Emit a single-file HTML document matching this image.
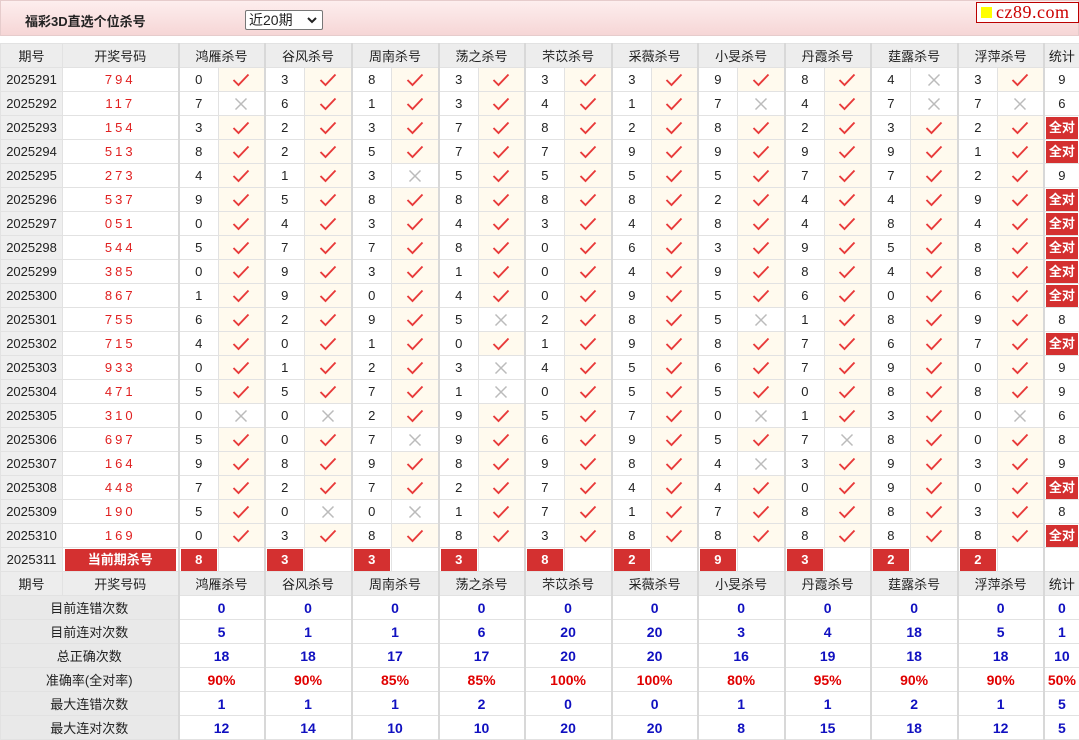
<!DOCTYPE html><html><head><meta charset="utf-8"><style>
body{margin:0;width:1079px;height:738px;overflow:hidden;background:#fff;font-family:"Liberation Sans","Noto Sans CJK SC",sans-serif;font-size:13px;color:#222}
.hd{position:absolute;left:0;top:0;width:1077px;height:34px;border:1px solid #e6cccc;background:linear-gradient(#fdeeee,#f6d6d6)}
.tt{position:absolute;left:24px;top:10px;font-weight:bold;font-size:13px;color:#222}
.sel{position:absolute;left:244px;top:9px;width:73px;height:18px;border:1px solid #777;border-radius:2px;background:#fff;font-size:14px;line-height:18px;padding-left:3px;box-sizing:content-box}
.sel svg{position:absolute;right:5px;top:6px}
.logo{position:absolute;left:975px;top:1px;width:101px;height:19px;border:1px solid #b00;background:#fff}
.logo i{position:absolute;left:4px;top:4px;width:11px;height:11px;background:#ff0}
.logo span{position:absolute;left:19px;top:-1px;font-family:"Liberation Serif",serif;font-size:18px;color:#c00;letter-spacing:.5px}
table{position:absolute;left:0;top:43px;border-collapse:collapse;table-layout:fixed;width:1079px}
td{height:23px;border:1px solid #e2e2e2;text-align:center;padding:0;font-size:13px;white-space:nowrap;overflow:hidden}
tr.h td{background:#ededed}
td.p{background:#efefef}
td.c{color:#e02020;letter-spacing:3px}
td.m{background:#fffaee}
td.g{border-left:2px solid #d8d8d8}
td.s span,td.r span{display:block;margin:0 1px;height:22px;line-height:22px;background:#d43030;color:#fff;font-weight:bold}
td.k span{display:block;height:22px;line-height:22px;background:#d43030;color:#fff;font-weight:bold;margin:0 2px}
td.l{background:#e9e9e9}
td.v{color:#1010c0;font-weight:bold;font-size:14px}
td.q{color:#e00000;font-weight:bold;font-size:14px}
td>svg{display:block;margin:0 auto}
</style></head><body>
<svg width="0" height="0" style="position:absolute"><defs>
<symbol id="y" viewBox="0 0 20 16"><path d="M2.5 8 L7.5 13 L17.5 2.5" fill="none" stroke="#e83a3a" stroke-width="1.9"/></symbol>
<symbol id="x" viewBox="0 0 20 16"><path d="M4.5 2.5 L15.5 13.5 M15.5 2.5 L4.5 13.5" fill="none" stroke="#bbb" stroke-width="1.5"/></symbol>
</defs></svg>
<div class="hd"><div class="tt">福彩3D直选个位杀号</div><div class="sel">近20期<svg width="10" height="7"><path d="M1 1 L5 5 L9 1" fill="none" stroke="#222" stroke-width="2"/></svg></div><div class="logo"><i></i><span>cz89.com</span></div></div>
<table id="t">
<colgroup><col style="width:62px"><col style="width:116px">
<col style="width:40px"><col style="width:46px"><col style="width:40px"><col style="width:47px"><col style="width:40px"><col style="width:47px"><col style="width:40px"><col style="width:46px"><col style="width:40px"><col style="width:47px"><col style="width:40px"><col style="width:46px"><col style="width:40px"><col style="width:47px"><col style="width:40px"><col style="width:46px"><col style="width:40px"><col style="width:47px"><col style="width:40px"><col style="width:46px"><col style="width:36px"></colgroup>
<tr class="h"><td>期号</td><td>开奖号码</td><td colspan="2" class="g">鸿雁杀号</td><td colspan="2" class="g">谷风杀号</td><td colspan="2" class="g">周南杀号</td><td colspan="2" class="g">荡之杀号</td><td colspan="2" class="g">芣苡杀号</td><td colspan="2" class="g">采薇杀号</td><td colspan="2" class="g">小旻杀号</td><td colspan="2" class="g">丹霞杀号</td><td colspan="2" class="g">莛露杀号</td><td colspan="2" class="g">浮萍杀号</td><td class="g">统计</td></tr>
<tr><td class="p">2025291</td><td class="c">794</td><td class="g">0</td><td class="m"><svg width="20" height="16"><use href="#y"/></svg></td><td class="g">3</td><td class="m"><svg width="20" height="16"><use href="#y"/></svg></td><td class="g">8</td><td class="m"><svg width="20" height="16"><use href="#y"/></svg></td><td class="g">3</td><td class="m"><svg width="20" height="16"><use href="#y"/></svg></td><td class="g">3</td><td class="m"><svg width="20" height="16"><use href="#y"/></svg></td><td class="g">3</td><td class="m"><svg width="20" height="16"><use href="#y"/></svg></td><td class="g">9</td><td class="m"><svg width="20" height="16"><use href="#y"/></svg></td><td class="g">8</td><td class="m"><svg width="20" height="16"><use href="#y"/></svg></td><td class="g">4</td><td><svg width="20" height="16"><use href="#x"/></svg></td><td class="g">3</td><td class="m"><svg width="20" height="16"><use href="#y"/></svg></td><td class="g">9</td></tr>
<tr><td class="p">2025292</td><td class="c">117</td><td class="g">7</td><td><svg width="20" height="16"><use href="#x"/></svg></td><td class="g">6</td><td class="m"><svg width="20" height="16"><use href="#y"/></svg></td><td class="g">1</td><td class="m"><svg width="20" height="16"><use href="#y"/></svg></td><td class="g">3</td><td class="m"><svg width="20" height="16"><use href="#y"/></svg></td><td class="g">4</td><td class="m"><svg width="20" height="16"><use href="#y"/></svg></td><td class="g">1</td><td class="m"><svg width="20" height="16"><use href="#y"/></svg></td><td class="g">7</td><td><svg width="20" height="16"><use href="#x"/></svg></td><td class="g">4</td><td class="m"><svg width="20" height="16"><use href="#y"/></svg></td><td class="g">7</td><td><svg width="20" height="16"><use href="#x"/></svg></td><td class="g">7</td><td><svg width="20" height="16"><use href="#x"/></svg></td><td class="g">6</td></tr>
<tr><td class="p">2025293</td><td class="c">154</td><td class="g">3</td><td class="m"><svg width="20" height="16"><use href="#y"/></svg></td><td class="g">2</td><td class="m"><svg width="20" height="16"><use href="#y"/></svg></td><td class="g">3</td><td class="m"><svg width="20" height="16"><use href="#y"/></svg></td><td class="g">7</td><td class="m"><svg width="20" height="16"><use href="#y"/></svg></td><td class="g">8</td><td class="m"><svg width="20" height="16"><use href="#y"/></svg></td><td class="g">2</td><td class="m"><svg width="20" height="16"><use href="#y"/></svg></td><td class="g">8</td><td class="m"><svg width="20" height="16"><use href="#y"/></svg></td><td class="g">2</td><td class="m"><svg width="20" height="16"><use href="#y"/></svg></td><td class="g">3</td><td class="m"><svg width="20" height="16"><use href="#y"/></svg></td><td class="g">2</td><td class="m"><svg width="20" height="16"><use href="#y"/></svg></td><td class="g s"><span>全对</span></td></tr>
<tr><td class="p">2025294</td><td class="c">513</td><td class="g">8</td><td class="m"><svg width="20" height="16"><use href="#y"/></svg></td><td class="g">2</td><td class="m"><svg width="20" height="16"><use href="#y"/></svg></td><td class="g">5</td><td class="m"><svg width="20" height="16"><use href="#y"/></svg></td><td class="g">7</td><td class="m"><svg width="20" height="16"><use href="#y"/></svg></td><td class="g">7</td><td class="m"><svg width="20" height="16"><use href="#y"/></svg></td><td class="g">9</td><td class="m"><svg width="20" height="16"><use href="#y"/></svg></td><td class="g">9</td><td class="m"><svg width="20" height="16"><use href="#y"/></svg></td><td class="g">9</td><td class="m"><svg width="20" height="16"><use href="#y"/></svg></td><td class="g">9</td><td class="m"><svg width="20" height="16"><use href="#y"/></svg></td><td class="g">1</td><td class="m"><svg width="20" height="16"><use href="#y"/></svg></td><td class="g s"><span>全对</span></td></tr>
<tr><td class="p">2025295</td><td class="c">273</td><td class="g">4</td><td class="m"><svg width="20" height="16"><use href="#y"/></svg></td><td class="g">1</td><td class="m"><svg width="20" height="16"><use href="#y"/></svg></td><td class="g">3</td><td><svg width="20" height="16"><use href="#x"/></svg></td><td class="g">5</td><td class="m"><svg width="20" height="16"><use href="#y"/></svg></td><td class="g">5</td><td class="m"><svg width="20" height="16"><use href="#y"/></svg></td><td class="g">5</td><td class="m"><svg width="20" height="16"><use href="#y"/></svg></td><td class="g">5</td><td class="m"><svg width="20" height="16"><use href="#y"/></svg></td><td class="g">7</td><td class="m"><svg width="20" height="16"><use href="#y"/></svg></td><td class="g">7</td><td class="m"><svg width="20" height="16"><use href="#y"/></svg></td><td class="g">2</td><td class="m"><svg width="20" height="16"><use href="#y"/></svg></td><td class="g">9</td></tr>
<tr><td class="p">2025296</td><td class="c">537</td><td class="g">9</td><td class="m"><svg width="20" height="16"><use href="#y"/></svg></td><td class="g">5</td><td class="m"><svg width="20" height="16"><use href="#y"/></svg></td><td class="g">8</td><td class="m"><svg width="20" height="16"><use href="#y"/></svg></td><td class="g">8</td><td class="m"><svg width="20" height="16"><use href="#y"/></svg></td><td class="g">8</td><td class="m"><svg width="20" height="16"><use href="#y"/></svg></td><td class="g">8</td><td class="m"><svg width="20" height="16"><use href="#y"/></svg></td><td class="g">2</td><td class="m"><svg width="20" height="16"><use href="#y"/></svg></td><td class="g">4</td><td class="m"><svg width="20" height="16"><use href="#y"/></svg></td><td class="g">4</td><td class="m"><svg width="20" height="16"><use href="#y"/></svg></td><td class="g">9</td><td class="m"><svg width="20" height="16"><use href="#y"/></svg></td><td class="g s"><span>全对</span></td></tr>
<tr><td class="p">2025297</td><td class="c">051</td><td class="g">0</td><td class="m"><svg width="20" height="16"><use href="#y"/></svg></td><td class="g">4</td><td class="m"><svg width="20" height="16"><use href="#y"/></svg></td><td class="g">3</td><td class="m"><svg width="20" height="16"><use href="#y"/></svg></td><td class="g">4</td><td class="m"><svg width="20" height="16"><use href="#y"/></svg></td><td class="g">3</td><td class="m"><svg width="20" height="16"><use href="#y"/></svg></td><td class="g">4</td><td class="m"><svg width="20" height="16"><use href="#y"/></svg></td><td class="g">8</td><td class="m"><svg width="20" height="16"><use href="#y"/></svg></td><td class="g">4</td><td class="m"><svg width="20" height="16"><use href="#y"/></svg></td><td class="g">8</td><td class="m"><svg width="20" height="16"><use href="#y"/></svg></td><td class="g">4</td><td class="m"><svg width="20" height="16"><use href="#y"/></svg></td><td class="g s"><span>全对</span></td></tr>
<tr><td class="p">2025298</td><td class="c">544</td><td class="g">5</td><td class="m"><svg width="20" height="16"><use href="#y"/></svg></td><td class="g">7</td><td class="m"><svg width="20" height="16"><use href="#y"/></svg></td><td class="g">7</td><td class="m"><svg width="20" height="16"><use href="#y"/></svg></td><td class="g">8</td><td class="m"><svg width="20" height="16"><use href="#y"/></svg></td><td class="g">0</td><td class="m"><svg width="20" height="16"><use href="#y"/></svg></td><td class="g">6</td><td class="m"><svg width="20" height="16"><use href="#y"/></svg></td><td class="g">3</td><td class="m"><svg width="20" height="16"><use href="#y"/></svg></td><td class="g">9</td><td class="m"><svg width="20" height="16"><use href="#y"/></svg></td><td class="g">5</td><td class="m"><svg width="20" height="16"><use href="#y"/></svg></td><td class="g">8</td><td class="m"><svg width="20" height="16"><use href="#y"/></svg></td><td class="g s"><span>全对</span></td></tr>
<tr><td class="p">2025299</td><td class="c">385</td><td class="g">0</td><td class="m"><svg width="20" height="16"><use href="#y"/></svg></td><td class="g">9</td><td class="m"><svg width="20" height="16"><use href="#y"/></svg></td><td class="g">3</td><td class="m"><svg width="20" height="16"><use href="#y"/></svg></td><td class="g">1</td><td class="m"><svg width="20" height="16"><use href="#y"/></svg></td><td class="g">0</td><td class="m"><svg width="20" height="16"><use href="#y"/></svg></td><td class="g">4</td><td class="m"><svg width="20" height="16"><use href="#y"/></svg></td><td class="g">9</td><td class="m"><svg width="20" height="16"><use href="#y"/></svg></td><td class="g">8</td><td class="m"><svg width="20" height="16"><use href="#y"/></svg></td><td class="g">4</td><td class="m"><svg width="20" height="16"><use href="#y"/></svg></td><td class="g">8</td><td class="m"><svg width="20" height="16"><use href="#y"/></svg></td><td class="g s"><span>全对</span></td></tr>
<tr><td class="p">2025300</td><td class="c">867</td><td class="g">1</td><td class="m"><svg width="20" height="16"><use href="#y"/></svg></td><td class="g">9</td><td class="m"><svg width="20" height="16"><use href="#y"/></svg></td><td class="g">0</td><td class="m"><svg width="20" height="16"><use href="#y"/></svg></td><td class="g">4</td><td class="m"><svg width="20" height="16"><use href="#y"/></svg></td><td class="g">0</td><td class="m"><svg width="20" height="16"><use href="#y"/></svg></td><td class="g">9</td><td class="m"><svg width="20" height="16"><use href="#y"/></svg></td><td class="g">5</td><td class="m"><svg width="20" height="16"><use href="#y"/></svg></td><td class="g">6</td><td class="m"><svg width="20" height="16"><use href="#y"/></svg></td><td class="g">0</td><td class="m"><svg width="20" height="16"><use href="#y"/></svg></td><td class="g">6</td><td class="m"><svg width="20" height="16"><use href="#y"/></svg></td><td class="g s"><span>全对</span></td></tr>
<tr><td class="p">2025301</td><td class="c">755</td><td class="g">6</td><td class="m"><svg width="20" height="16"><use href="#y"/></svg></td><td class="g">2</td><td class="m"><svg width="20" height="16"><use href="#y"/></svg></td><td class="g">9</td><td class="m"><svg width="20" height="16"><use href="#y"/></svg></td><td class="g">5</td><td><svg width="20" height="16"><use href="#x"/></svg></td><td class="g">2</td><td class="m"><svg width="20" height="16"><use href="#y"/></svg></td><td class="g">8</td><td class="m"><svg width="20" height="16"><use href="#y"/></svg></td><td class="g">5</td><td><svg width="20" height="16"><use href="#x"/></svg></td><td class="g">1</td><td class="m"><svg width="20" height="16"><use href="#y"/></svg></td><td class="g">8</td><td class="m"><svg width="20" height="16"><use href="#y"/></svg></td><td class="g">9</td><td class="m"><svg width="20" height="16"><use href="#y"/></svg></td><td class="g">8</td></tr>
<tr><td class="p">2025302</td><td class="c">715</td><td class="g">4</td><td class="m"><svg width="20" height="16"><use href="#y"/></svg></td><td class="g">0</td><td class="m"><svg width="20" height="16"><use href="#y"/></svg></td><td class="g">1</td><td class="m"><svg width="20" height="16"><use href="#y"/></svg></td><td class="g">0</td><td class="m"><svg width="20" height="16"><use href="#y"/></svg></td><td class="g">1</td><td class="m"><svg width="20" height="16"><use href="#y"/></svg></td><td class="g">9</td><td class="m"><svg width="20" height="16"><use href="#y"/></svg></td><td class="g">8</td><td class="m"><svg width="20" height="16"><use href="#y"/></svg></td><td class="g">7</td><td class="m"><svg width="20" height="16"><use href="#y"/></svg></td><td class="g">6</td><td class="m"><svg width="20" height="16"><use href="#y"/></svg></td><td class="g">7</td><td class="m"><svg width="20" height="16"><use href="#y"/></svg></td><td class="g s"><span>全对</span></td></tr>
<tr><td class="p">2025303</td><td class="c">933</td><td class="g">0</td><td class="m"><svg width="20" height="16"><use href="#y"/></svg></td><td class="g">1</td><td class="m"><svg width="20" height="16"><use href="#y"/></svg></td><td class="g">2</td><td class="m"><svg width="20" height="16"><use href="#y"/></svg></td><td class="g">3</td><td><svg width="20" height="16"><use href="#x"/></svg></td><td class="g">4</td><td class="m"><svg width="20" height="16"><use href="#y"/></svg></td><td class="g">5</td><td class="m"><svg width="20" height="16"><use href="#y"/></svg></td><td class="g">6</td><td class="m"><svg width="20" height="16"><use href="#y"/></svg></td><td class="g">7</td><td class="m"><svg width="20" height="16"><use href="#y"/></svg></td><td class="g">9</td><td class="m"><svg width="20" height="16"><use href="#y"/></svg></td><td class="g">0</td><td class="m"><svg width="20" height="16"><use href="#y"/></svg></td><td class="g">9</td></tr>
<tr><td class="p">2025304</td><td class="c">471</td><td class="g">5</td><td class="m"><svg width="20" height="16"><use href="#y"/></svg></td><td class="g">5</td><td class="m"><svg width="20" height="16"><use href="#y"/></svg></td><td class="g">7</td><td class="m"><svg width="20" height="16"><use href="#y"/></svg></td><td class="g">1</td><td><svg width="20" height="16"><use href="#x"/></svg></td><td class="g">0</td><td class="m"><svg width="20" height="16"><use href="#y"/></svg></td><td class="g">5</td><td class="m"><svg width="20" height="16"><use href="#y"/></svg></td><td class="g">5</td><td class="m"><svg width="20" height="16"><use href="#y"/></svg></td><td class="g">0</td><td class="m"><svg width="20" height="16"><use href="#y"/></svg></td><td class="g">8</td><td class="m"><svg width="20" height="16"><use href="#y"/></svg></td><td class="g">8</td><td class="m"><svg width="20" height="16"><use href="#y"/></svg></td><td class="g">9</td></tr>
<tr><td class="p">2025305</td><td class="c">310</td><td class="g">0</td><td><svg width="20" height="16"><use href="#x"/></svg></td><td class="g">0</td><td><svg width="20" height="16"><use href="#x"/></svg></td><td class="g">2</td><td class="m"><svg width="20" height="16"><use href="#y"/></svg></td><td class="g">9</td><td class="m"><svg width="20" height="16"><use href="#y"/></svg></td><td class="g">5</td><td class="m"><svg width="20" height="16"><use href="#y"/></svg></td><td class="g">7</td><td class="m"><svg width="20" height="16"><use href="#y"/></svg></td><td class="g">0</td><td><svg width="20" height="16"><use href="#x"/></svg></td><td class="g">1</td><td class="m"><svg width="20" height="16"><use href="#y"/></svg></td><td class="g">3</td><td class="m"><svg width="20" height="16"><use href="#y"/></svg></td><td class="g">0</td><td><svg width="20" height="16"><use href="#x"/></svg></td><td class="g">6</td></tr>
<tr><td class="p">2025306</td><td class="c">697</td><td class="g">5</td><td class="m"><svg width="20" height="16"><use href="#y"/></svg></td><td class="g">0</td><td class="m"><svg width="20" height="16"><use href="#y"/></svg></td><td class="g">7</td><td><svg width="20" height="16"><use href="#x"/></svg></td><td class="g">9</td><td class="m"><svg width="20" height="16"><use href="#y"/></svg></td><td class="g">6</td><td class="m"><svg width="20" height="16"><use href="#y"/></svg></td><td class="g">9</td><td class="m"><svg width="20" height="16"><use href="#y"/></svg></td><td class="g">5</td><td class="m"><svg width="20" height="16"><use href="#y"/></svg></td><td class="g">7</td><td><svg width="20" height="16"><use href="#x"/></svg></td><td class="g">8</td><td class="m"><svg width="20" height="16"><use href="#y"/></svg></td><td class="g">0</td><td class="m"><svg width="20" height="16"><use href="#y"/></svg></td><td class="g">8</td></tr>
<tr><td class="p">2025307</td><td class="c">164</td><td class="g">9</td><td class="m"><svg width="20" height="16"><use href="#y"/></svg></td><td class="g">8</td><td class="m"><svg width="20" height="16"><use href="#y"/></svg></td><td class="g">9</td><td class="m"><svg width="20" height="16"><use href="#y"/></svg></td><td class="g">8</td><td class="m"><svg width="20" height="16"><use href="#y"/></svg></td><td class="g">9</td><td class="m"><svg width="20" height="16"><use href="#y"/></svg></td><td class="g">8</td><td class="m"><svg width="20" height="16"><use href="#y"/></svg></td><td class="g">4</td><td><svg width="20" height="16"><use href="#x"/></svg></td><td class="g">3</td><td class="m"><svg width="20" height="16"><use href="#y"/></svg></td><td class="g">9</td><td class="m"><svg width="20" height="16"><use href="#y"/></svg></td><td class="g">3</td><td class="m"><svg width="20" height="16"><use href="#y"/></svg></td><td class="g">9</td></tr>
<tr><td class="p">2025308</td><td class="c">448</td><td class="g">7</td><td class="m"><svg width="20" height="16"><use href="#y"/></svg></td><td class="g">2</td><td class="m"><svg width="20" height="16"><use href="#y"/></svg></td><td class="g">7</td><td class="m"><svg width="20" height="16"><use href="#y"/></svg></td><td class="g">2</td><td class="m"><svg width="20" height="16"><use href="#y"/></svg></td><td class="g">7</td><td class="m"><svg width="20" height="16"><use href="#y"/></svg></td><td class="g">4</td><td class="m"><svg width="20" height="16"><use href="#y"/></svg></td><td class="g">4</td><td class="m"><svg width="20" height="16"><use href="#y"/></svg></td><td class="g">0</td><td class="m"><svg width="20" height="16"><use href="#y"/></svg></td><td class="g">9</td><td class="m"><svg width="20" height="16"><use href="#y"/></svg></td><td class="g">0</td><td class="m"><svg width="20" height="16"><use href="#y"/></svg></td><td class="g s"><span>全对</span></td></tr>
<tr><td class="p">2025309</td><td class="c">190</td><td class="g">5</td><td class="m"><svg width="20" height="16"><use href="#y"/></svg></td><td class="g">0</td><td><svg width="20" height="16"><use href="#x"/></svg></td><td class="g">0</td><td><svg width="20" height="16"><use href="#x"/></svg></td><td class="g">1</td><td class="m"><svg width="20" height="16"><use href="#y"/></svg></td><td class="g">7</td><td class="m"><svg width="20" height="16"><use href="#y"/></svg></td><td class="g">1</td><td class="m"><svg width="20" height="16"><use href="#y"/></svg></td><td class="g">7</td><td class="m"><svg width="20" height="16"><use href="#y"/></svg></td><td class="g">8</td><td class="m"><svg width="20" height="16"><use href="#y"/></svg></td><td class="g">8</td><td class="m"><svg width="20" height="16"><use href="#y"/></svg></td><td class="g">3</td><td class="m"><svg width="20" height="16"><use href="#y"/></svg></td><td class="g">8</td></tr>
<tr><td class="p">2025310</td><td class="c">169</td><td class="g">0</td><td class="m"><svg width="20" height="16"><use href="#y"/></svg></td><td class="g">3</td><td class="m"><svg width="20" height="16"><use href="#y"/></svg></td><td class="g">8</td><td class="m"><svg width="20" height="16"><use href="#y"/></svg></td><td class="g">8</td><td class="m"><svg width="20" height="16"><use href="#y"/></svg></td><td class="g">3</td><td class="m"><svg width="20" height="16"><use href="#y"/></svg></td><td class="g">8</td><td class="m"><svg width="20" height="16"><use href="#y"/></svg></td><td class="g">8</td><td class="m"><svg width="20" height="16"><use href="#y"/></svg></td><td class="g">8</td><td class="m"><svg width="20" height="16"><use href="#y"/></svg></td><td class="g">8</td><td class="m"><svg width="20" height="16"><use href="#y"/></svg></td><td class="g">8</td><td class="m"><svg width="20" height="16"><use href="#y"/></svg></td><td class="g s"><span>全对</span></td></tr>
<tr><td class="p">2025311</td><td class="k"><span>当前期杀号</span></td><td class="g r"><span>8</span></td><td></td><td class="g r"><span>3</span></td><td></td><td class="g r"><span>3</span></td><td></td><td class="g r"><span>3</span></td><td></td><td class="g r"><span>8</span></td><td></td><td class="g r"><span>2</span></td><td></td><td class="g r"><span>9</span></td><td></td><td class="g r"><span>3</span></td><td></td><td class="g r"><span>2</span></td><td></td><td class="g r"><span>2</span></td><td></td><td class="g"></td></tr>
<tr class="h"><td>期号</td><td>开奖号码</td><td colspan="2" class="g">鸿雁杀号</td><td colspan="2" class="g">谷风杀号</td><td colspan="2" class="g">周南杀号</td><td colspan="2" class="g">荡之杀号</td><td colspan="2" class="g">芣苡杀号</td><td colspan="2" class="g">采薇杀号</td><td colspan="2" class="g">小旻杀号</td><td colspan="2" class="g">丹霞杀号</td><td colspan="2" class="g">莛露杀号</td><td colspan="2" class="g">浮萍杀号</td><td class="g">统计</td></tr>
<tr><td colspan="2" class="l">目前连错次数</td><td colspan="2" class="g v">0</td><td colspan="2" class="g v">0</td><td colspan="2" class="g v">0</td><td colspan="2" class="g v">0</td><td colspan="2" class="g v">0</td><td colspan="2" class="g v">0</td><td colspan="2" class="g v">0</td><td colspan="2" class="g v">0</td><td colspan="2" class="g v">0</td><td colspan="2" class="g v">0</td><td class="g v">0</td></tr>
<tr><td colspan="2" class="l">目前连对次数</td><td colspan="2" class="g v">5</td><td colspan="2" class="g v">1</td><td colspan="2" class="g v">1</td><td colspan="2" class="g v">6</td><td colspan="2" class="g v">20</td><td colspan="2" class="g v">20</td><td colspan="2" class="g v">3</td><td colspan="2" class="g v">4</td><td colspan="2" class="g v">18</td><td colspan="2" class="g v">5</td><td class="g v">1</td></tr>
<tr><td colspan="2" class="l">总正确次数</td><td colspan="2" class="g v">18</td><td colspan="2" class="g v">18</td><td colspan="2" class="g v">17</td><td colspan="2" class="g v">17</td><td colspan="2" class="g v">20</td><td colspan="2" class="g v">20</td><td colspan="2" class="g v">16</td><td colspan="2" class="g v">19</td><td colspan="2" class="g v">18</td><td colspan="2" class="g v">18</td><td class="g v">10</td></tr>
<tr><td colspan="2" class="l">准确率(全对率)</td><td colspan="2" class="g q">90%</td><td colspan="2" class="g q">90%</td><td colspan="2" class="g q">85%</td><td colspan="2" class="g q">85%</td><td colspan="2" class="g q">100%</td><td colspan="2" class="g q">100%</td><td colspan="2" class="g q">80%</td><td colspan="2" class="g q">95%</td><td colspan="2" class="g q">90%</td><td colspan="2" class="g q">90%</td><td class="g q">50%</td></tr>
<tr><td colspan="2" class="l">最大连错次数</td><td colspan="2" class="g v">1</td><td colspan="2" class="g v">1</td><td colspan="2" class="g v">1</td><td colspan="2" class="g v">2</td><td colspan="2" class="g v">0</td><td colspan="2" class="g v">0</td><td colspan="2" class="g v">1</td><td colspan="2" class="g v">1</td><td colspan="2" class="g v">2</td><td colspan="2" class="g v">1</td><td class="g v">5</td></tr>
<tr><td colspan="2" class="l">最大连对次数</td><td colspan="2" class="g v">12</td><td colspan="2" class="g v">14</td><td colspan="2" class="g v">10</td><td colspan="2" class="g v">10</td><td colspan="2" class="g v">20</td><td colspan="2" class="g v">20</td><td colspan="2" class="g v">8</td><td colspan="2" class="g v">15</td><td colspan="2" class="g v">18</td><td colspan="2" class="g v">12</td><td class="g v">5</td></tr>
</table>
</body></html>
